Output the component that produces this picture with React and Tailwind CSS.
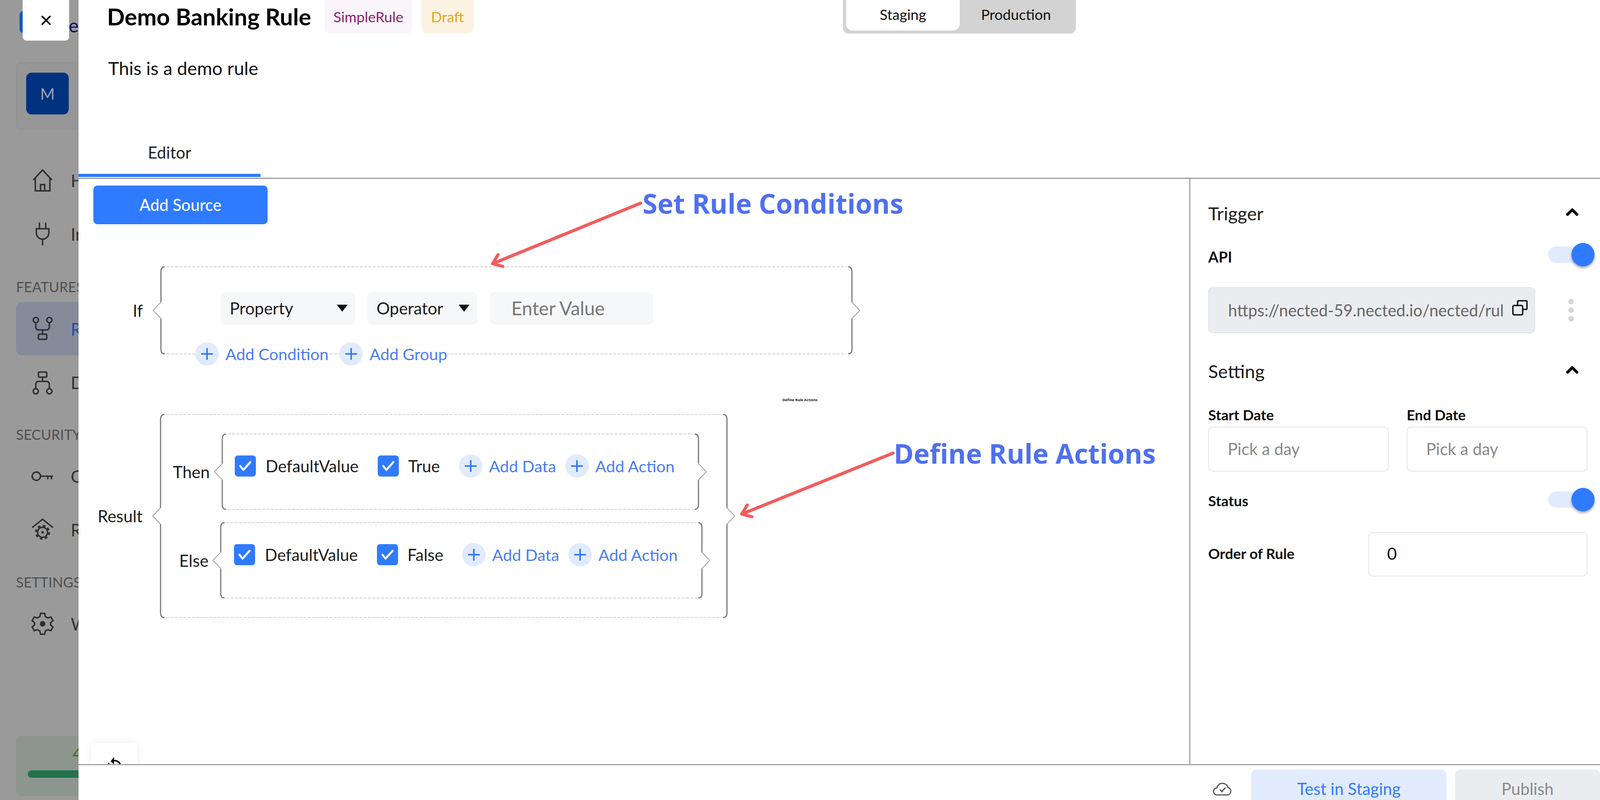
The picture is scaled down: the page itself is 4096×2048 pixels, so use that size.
import { X, ChevronUp } from "lucide-react";

function Plus({ className = "" }) {
  return (
    <svg width="60" height="60" viewBox="0 0 60 60" className={className}>
      <circle cx="30" cy="30" r="30" fill="#e2ebfd" />
      <path d="M30 15v30M15 30h30" stroke="#2f7bff" strokeWidth="4" fill="none" />
    </svg>
  );
}

function AddButton({ label, width, className = "" }) {
  return (
    <div className={`flex items-center ${className}`}>
      <Plus className="bg-white" />
      <span className={`pl-[17px] text-[41.5px] leading-[60px] bg-white text-[#4a7df2] whitespace-nowrap ${width}`}>{label}</span>
    </div>
  );
}

function Check({ className = "" }) {
  return (
    <span className={`flex items-center justify-center rounded-[8px] bg-[#2f7bff] ${className}`}>
      <svg width="34" height="26" viewBox="0 0 34 26" fill="none">
        <path d="M4 13l8 10L30 3" stroke="#fff" strokeWidth="5" strokeLinecap="round" strokeLinejoin="round" />
      </svg>
    </span>
  );
}

function Side({ h, right }) {
  const mid = h / 2;
  const line = right
    ? `M0 1Q10 1 10 13V${mid - 21}M10 ${mid + 21}V${h - 13}Q10 ${h - 1} 0 ${h - 1}`
    : `M32 1Q22 1 22 13V${mid - 21}M22 ${mid + 21}V${h - 13}Q22 ${h - 1} 32 ${h - 1}`;
  const notch = right
    ? `M10 ${mid - 21}L30 ${mid}L10 ${mid + 21}`
    : `M22 ${mid - 21}L2 ${mid}L22 ${mid + 21}`;
  return (
    <svg
      width="32"
      height={h}
      viewBox={`0 0 32 ${h}`}
      fill="none"
      className={`absolute top-0 ${right ? "right-[-22px]" : "left-[-23px]"}`}
    >
      <path d={line} stroke="#7a7a7a" strokeWidth="3" />
      <path d={notch} stroke="#a0a0a0" strokeWidth="2" />
    </svg>
  );
}

// curly bracket block used by the If / Then / Else / Result groups
function Bracket({ h, box, children }) {
  const dash = "absolute inset-x-0 h-[2px] bg-[repeating-linear-gradient(90deg,#cfcfcf_0_8px,transparent_8px_11px)]";
  return (
    <div className={`relative ${box}`}>
      <Side h={h} />
      <Side h={h} right />
      <div className="relative h-full mx-[13px]">
        <div className={`${dash} top-0`} />
        <div className={`${dash} bottom-0`} />
        <div className="relative h-full flow-root">{children}</div>
      </div>
    </div>
  );
}

function ActionRow({ first, boolLabel, boolWidth, dataGap, className = "" }) {
  return (
    <div className={`flex items-center text-[42px] leading-[60px] text-[#1c1c1c] ${className}`}>
      <Check className={`w-[54px] h-[54px] ${first}`} />
      <span className="ml-[25px] w-[240px] whitespace-nowrap">DefaultValue</span>
      <Check className="ml-[47px] w-[54px] h-[54px]" />
      <span className={`ml-[24px] whitespace-nowrap ${boolWidth}`}>{boolLabel}</span>
      <AddButton label="Add Data" width="w-[187px]" className={dataGap} />
      <AddButton label="Add Action" width="w-[222px]" className="ml-[25px]" />
    </div>
  );
}

function NavIcon({ children }) {
  return (
    <svg width="64" height="64" viewBox="0 0 24 24" fill="none" stroke="#2e2e2e" strokeWidth="1.4" className="shrink-0">
      {children}
    </svg>
  );
}

function NavRow({ icon, label, active }) {
  return (
    <div className={`ml-[41px] h-[137px] pl-[36px] flex items-center rounded-l-[16px] ${active ? "bg-[#858b99]" : ""}`}>
      <NavIcon>{icon}</NavIcon>
      <span className={`ml-[40px] text-[44px] whitespace-nowrap ${active ? "text-[#1f4fa8]" : "text-[#333]"}`}>{label}</span>
    </div>
  );
}

function NavLabel({ children, className = "" }) {
  return <div className={`ml-[41px] h-[40px] flex items-center text-[36px] text-[#505050] whitespace-nowrap ${className}`}>{children}</div>;
}

function Sidebar() {
  return (
    <aside className="w-[201px] shrink-0 h-full overflow-hidden bg-[#9a9a9a]">
      <div className="pt-[28px] h-[85px] pl-[50px] flex items-start">
        <div className="w-[60px] h-[57px] rounded-[10px] bg-[#1259c3]" />
        <span className="ml-[67px] text-[48px] leading-[57px] mt-[8px] text-[#0b0b58]">e</span>
      </div>
      <div className="mt-[74px] ml-[41px] h-[173px] w-[300px] pl-[24px] pt-[25px] rounded-[12px] border-2 border-[#929292] bg-[#969696]">
        <div className="w-[109px] h-[107px] rounded-[14px] bg-[#00327f] flex items-center justify-center text-[40px] text-[#9aa3b0]">M</div>
      </div>
      <div className="mt-[61px]">
        <NavRow label="Home" icon={<path d="M3 11.500L12 2l9 9.500M5 9.500V22h14V9.500M10 22v-6h4v6" />} />
      </div>
      <NavRow label="Integrations" icon={<path d="M9 1v6M15 1v6M6 7h12v4a6 6 0 0 1-12 0V7zM12 17v6" />} />
      <NavLabel className="mt-[47px]">FEATURES</NavLabel>
      <div className="mt-[19px]">
        <NavRow
          active
          label="Rules"
          icon={
            <>
              <circle cx="5.500" cy="3.500" r="2.500" />
              <circle cx="18.500" cy="3.500" r="2.500" />
              <path d="M5.500 6V10q0 3 3 3h7q3 0 3-3V6M12 13v4" />
              <rect x="8" y="17" width="8" height="5" rx="1" />
            </>
          }
        />
      </div>
      <NavRow
        label="Data"
        icon={
          <>
            <rect x="8" y="2" width="8" height="5" rx="1" />
            <path d="M12 7v4M5.500 18V14q0-3 3-3h7q3 0 3 3v4" />
            <circle cx="5.500" cy="20.500" r="2.500" />
            <circle cx="18.500" cy="20.500" r="2.500" />
          </>
        }
      />
      <NavLabel className="mt-[45px]">SECURITY</NavLabel>
      <div className="mt-[18px]">
        <NavRow
          label="Credentials"
          icon={
            <>
              <circle cx="6" cy="12" r="4" />
              <path d="M10 12H22M17 12v3M20.500 12v3" />
            </>
          }
        />
      </div>
      <NavRow
        label="Roles"
        icon={
          <>
            <path d="M2 10l10-8 10 8" />
            <circle cx="12" cy="14.500" r="4.800" />
            <circle cx="12" cy="14.500" r="6.300" strokeWidth="1.700" strokeDasharray="2.600 2.350" />
            <circle cx="12" cy="14.500" r="1.200" fill="#2e2e2e" stroke="none" />
          </>
        }
      />
      <NavLabel className="mt-[46px]">SETTINGS</NavLabel>
      <div className="mt-[18px]">
        <NavRow
          label="Workspace"
          icon={
            <>
              <path d="M10 2h4l.6 3 2.500 1.400 2.900-1 2 3.500-2.300 2v2.200l2.300 2-2 3.500-2.900-1-2.500 1.400-.6 3h-4l-.6-3-2.500-1.400-2.900 1-2-3.500 2.300-2v-2.200l-2.300-2 2-3.500 2.900 1L9.400 5z" />
              <circle cx="12" cy="12" r="2" fill="#2e2e2e" />
            </>
          }
        />
      </div>
      <div className="mt-[219px] ml-[41px] w-[300px] h-[154px] pl-[30px] pt-[20px] rounded-[12px] bg-[#8d968e]">
        <div className="pl-[115px] text-[40px] leading-[50px] text-[#2b6e1f]">4</div>
        <div className="mt-[18px] h-[19px] rounded-full bg-[#22724c]" />
      </div>
    </aside>
  );
}

function Header() {
  return (
    <header className="h-[458px] shrink-0 flex flex-col border-b-[3px] border-[#9c9c9c]">
      <div className="flex items-start pl-[73px]">
        <h1 className="w-[557px] text-[59.7px] leading-[84px] font-bold text-black whitespace-nowrap">Demo Banking Rule</h1>
        <span className="w-[224px] h-[86px] flex items-center justify-center rounded-b-[14px] bg-[#faf5fa] text-[37px] text-[#8b1f6f]">SimpleRule</span>
        <span className="ml-[24px] w-[133px] h-[86px] flex items-center justify-center rounded-b-[14px] bg-[#fdf3e3] text-[37px] text-[#e0a526]">Draft</span>
        <div className="ml-[946px] w-[596px] h-[86px] pl-[8px] flex rounded-b-[14px] bg-[#d3d3d3] text-[37px] text-[#111]">
          <div className="w-[291px] h-[78px] pb-[5px] flex items-center justify-center rounded-b-[16px] bg-white">Staging</div>
          <div className="w-[288px] h-[78px] pb-[5px] flex items-center justify-center">Production</div>
        </div>
      </div>
      <p className="mt-[58px] pl-[76px] text-[47px] leading-[60px] text-[#111]">This is a demo rule</p>
      <div className="mt-auto w-[466px] h-[110px] pb-[8px] flex items-center justify-center border-b-[8px] border-[#2f7bff] mb-[2px] text-[42px] text-[#222]">
        Editor
      </div>
    </header>
  );
}

function Chip({ width, label, gap = "" }) {
  return (
    <div className={`h-[84px] flex items-center rounded-[12px] bg-[#f6f7f9] pl-[24px] ${width} ${gap}`}>
      <span>{label}</span>
      <svg width="28" height="18" viewBox="0 0 28 18" className="ml-auto mr-[20px]">
        <path d="M0 0h28L14 18z" fill="#111" />
      </svg>
    </div>
  );
}

function Editor() {
  return (
    <section className="relative flex-1 min-w-0 pt-[17px] pl-[38px] text-[#1c1c1c]">
      <button className="w-[446px] h-[99px] rounded-[10px] bg-[#2f7bff] text-white text-[41.5px] font-medium">Add Source</button>

      <div className="mt-[108px] flex items-center">
        <span className="w-[127px] mr-[47px] text-right text-[42.5px]">If</span>
        <Bracket h={225} box="w-[1768px] h-[225px]">
          <div className="ml-[138px] mt-[65px] flex text-[42.5px] leading-[84px]">
            <Chip width="w-[346px]" label="Property" />
            <Chip width="w-[282px]" label="Operator" gap="ml-[30px]" />
            <div className="ml-[33px] w-[417px] h-[84px] pl-[54px] rounded-[12px] bg-[#f6f7f9] text-[48px] text-[#777]">Enter Value</div>
          </div>
          <div className="ml-[74px] mt-[45px] flex">
            <AddButton label="Add Condition" width="w-[280px]" />
            <AddButton label="Add Group" width="w-[212px]" className="ml-[29px]" />
          </div>
        </Bracket>
      </div>

      <div className="mt-[153px] flex items-center">
        <span className="w-[126px] mr-[47px] text-right text-[42.5px]">Result</span>
        <Bracket h={522} box="w-[1449px] h-[522px]">
          <div className="mt-[50px] flex items-center">
            <span className="w-[112px] text-right text-[42.5px]">Then</span>
            <div className="ml-[33px]">
              <Bracket h={195} box="w-[1218px] h-[195px]">
                <ActionRow first="ml-[18px]" boolLabel="True" boolWidth="w-[82px]" dataGap="ml-[48px]" className="mt-[53px]" />
              </Bracket>
            </div>
          </div>
          <div className="mt-[32px] flex items-center">
            <span className="w-[109px] text-right text-[42.5px]">Else</span>
            <div className="ml-[32px]">
              <Bracket h={195} box="w-[1231px] h-[195px]">
                <ActionRow first="ml-[20px]" boolLabel="False" boolWidth="w-[93px]" dataGap="ml-[47px]" className="mt-[53px]" />
              </Bracket>
            </div>
          </div>
        </Bracket>
      </div>

      <div className="absolute left-[32px] bottom-[-30px] w-[119px] h-[84px] pt-[36px] flex justify-center rounded-[10px] bg-white shadow-[0_0_24px_rgba(0,0,0,0.07)]">
        <svg width="34" height="24" viewBox="0 0 34 24" fill="none">
          <path d="M16 0L7 11l9 8z" fill="#111" />
          <path d="M14 9q13-1 18 10" stroke="#111" strokeWidth="4" />
          <circle cx="2" cy="17" r="2.500" fill="#111" />
        </svg>
      </div>
    </section>
  );
}

function Toggle({ className = "" }) {
  return (
    <div className={`relative w-[119px] h-[42px] rounded-full bg-[#e2ebfd] ${className}`}>
      <div className="absolute right-0 top-[-9px] w-[59px] h-[60px] rounded-full bg-[#2f7bff] shadow-[0_4px_6px_rgba(0,0,0,0.35)]" />
    </div>
  );
}

function SectionHead({ title, className = "" }) {
  return (
    <div className={`h-[60px] flex items-center justify-between pr-[47px] ${className}`}>
      <span className="text-[47px] text-[#1c1c1c]">{title}</span>
      <ChevronUp size={48} strokeWidth={3.6} className="text-black -mt-[6px]" />
    </div>
  );
}

function RightPanel() {
  const field = "rounded-[12px] border-2 border-[#e3e4e8] bg-white";
  return (
    <aside className="w-[1051px] shrink-0 border-l-2 border-[#808080] pl-[46px] text-[#111]">
      <SectionHead title="Trigger" className="mt-[58px]" />
      <div className="mt-[51px] h-[60px] flex items-center justify-between pr-[14px]">
        <span className="text-[38px] font-bold">API</span>
        <Toggle className="-mt-[10px]" />
      </div>
      <div className="mt-[48px] flex items-center">
        <div className="w-[837px] h-[118px] pl-[49px] flex items-center rounded-[12px] border-2 border-[#e3e4e8] bg-[#ebecef] text-[41.6px] text-[#666]">
          <span className="w-[699px] whitespace-nowrap">https://nected-59.nected.io/nected/rul</span>
          <svg width="40" height="40" viewBox="0 0 40 40" fill="none" stroke="#111" strokeWidth="3.5" className="ml-[28px] -mt-[12px]">
            <path d="M14 14V4q0-2 2-2h20q2 0 2 2v18q0 2-2 2H27" />
            <rect x="2" y="14" width="25" height="24" rx="3" />
          </svg>
        </div>
        <div className="ml-[85px] flex flex-col gap-[8px]">
          <span className="w-[14px] h-[14px] rounded-full bg-[#d5d5d5]" />
          <span className="w-[14px] h-[14px] rounded-full bg-[#d5d5d5]" />
          <span className="w-[14px] h-[14px] rounded-full bg-[#d5d5d5]" />
        </div>
      </div>
      <SectionHead title="Setting" className="mt-[67px]" />
      <div className="mt-[59px] grid grid-cols-[462px_463px] gap-x-[46px] text-[37px] font-bold">
        <span className="h-[46px] leading-[46px]">Start Date</span>
        <span className="h-[46px] leading-[46px]">End Date</span>
        <div className={`mt-[7px] h-[115px] pl-[48px] flex items-center text-[42px] font-normal text-[#888] ${field}`}>Pick a day</div>
        <div className={`mt-[7px] h-[115px] pl-[48px] flex items-center text-[42px] font-normal text-[#888] ${field}`}>Pick a day</div>
      </div>
      <div className="mt-[45px] h-[60px] flex items-center justify-between pr-[14px]">
        <span className="text-[37px] font-bold">Status</span>
        <Toggle className="-mt-[6px]" />
      </div>
      <div className="mt-[50px] flex items-center">
        <span className="w-[410px] pb-[5px] text-[37px] font-bold">Order of Rule</span>
        <div className={`w-[561px] h-[114px] pl-[46px] pb-[4px] flex items-center text-[43px] ${field}`}>0</div>
      </div>
    </aside>
  );
}

function Footer() {
  return (
    <footer className="h-[92px] shrink-0 pt-[11px] flex items-stretch justify-end border-t-[3px] border-[#a6a6a6] bg-white text-[42px]">
      <svg width="50" height="38" viewBox="0 0 50 38" fill="none" stroke="#555" strokeWidth="3" className="mt-[30px] mr-[48px]">
        <path d="M13 35H11a9 9 0 0 1-1-18 15 15 0 0 1 29-1 10 10 0 0 1 0 19z" />
        <path d="M18 21l5 6 9-11" />
      </svg>
      <div className="w-[500px] pt-[20px] flex items-center justify-center rounded-t-[14px] bg-[#e2ebfd] text-[#2f7bff]">Test in Staging</div>
      <div className="ml-[22px] w-[371px] pt-[20px] flex items-center justify-center rounded-t-[14px] bg-[#ebecef] text-[#8a8a8a]">Publish</div>
    </footer>
  );
}

function Arrow({ x1, y1, x2, y2 }) {
  return (
    <>
      <path d={`M${x1} ${y1}L${x2} ${y2}`} />
      <path d={`M${x2 + 14} ${y2 - 23}L${x2} ${y2}L${x2 + 26} ${y2 + 7}`} />
    </>
  );
}

// annotations drawn on top of the screenshot
function Annotations() {
  return (
    <div className="absolute inset-0 pointer-events-none">
      <svg width="4096" height="2048" fill="none" stroke="#f25c5c" strokeWidth="8" strokeLinecap="round" strokeLinejoin="round" className="absolute inset-0">
        <Arrow x1={1640} y1={520} x2={1261} y2={675} />
        <Arrow x1={2286} y1={1160} x2={1899} y2={1316} />
      </svg>
      <span className="absolute left-[1645px] top-[472px] font-['Open_Sans',sans-serif] font-bold text-[69px] leading-[96px] text-[#4f70f0] whitespace-nowrap">Set Rule Conditions</span>
      <span className="absolute left-[2288px] top-[1112px] font-['Open_Sans',sans-serif] font-bold text-[69px] leading-[96px] text-[#4f70f0] whitespace-nowrap">Define Rule Actions</span>
      <span className="absolute left-[2003px] top-[1016px] font-['Open_Sans',sans-serif] font-bold text-[9.25px] leading-[16px] text-[#111] whitespace-nowrap">Define Rule Actions</span>
    </div>
  );
}

export default function App() {
  return (
    <div className="relative w-[4096px] h-[2048px] overflow-hidden flex bg-white font-['Lato',sans-serif]">
      <Sidebar />
      <main className="flex-1 min-w-0 flex flex-col">
        <Header />
        <div className="relative flex-1 min-h-0 flex overflow-hidden">
          <Editor />
          <RightPanel />
        </div>
        <Footer />
      </main>
      <button className="absolute left-[58px] top-0 w-[119px] h-[104px] flex items-center justify-center rounded-b-[10px] bg-white">
        <X size={40} strokeWidth={2.4} className="text-[#111]" />
      </button>
      <Annotations />
    </div>
  );
}
